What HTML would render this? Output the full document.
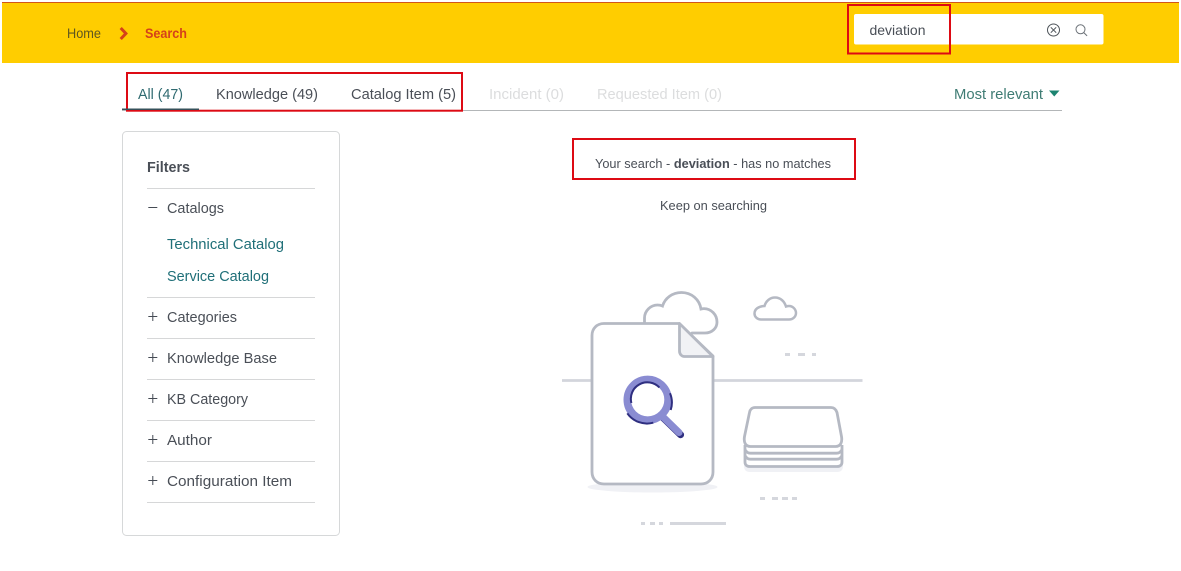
<!DOCTYPE html>
<html><head><meta charset="utf-8"><style>
html,body{margin:0;padding:0;background:#fff;width:1181px;height:571px;overflow:hidden}
svg{display:block}
text{font-family:"Liberation Sans",sans-serif;fill:#4a4f57}
</style></head><body>
<svg width="1181" height="571" viewBox="0 0 1181 571" xmlns="http://www.w3.org/2000/svg">
<rect x="2" y="2" width="1177" height="61" fill="#ffcd00"/>
<rect x="2" y="2" width="1177" height="1" fill="#d2561a"/>
<text x="67" y="38" font-size="13.500" textLength="34" lengthAdjust="spacingAndGlyphs" style="fill:#5f5720">Home</text>
<path d="M120.700 28l5.200 5.500-5.200 5.500" fill="none" stroke="#d5411a" stroke-width="3"/>
<text x="145" y="38" font-size="13.500" font-weight="bold" textLength="42" lengthAdjust="spacingAndGlyphs" style="fill:#d5411a">Search</text>
<rect x="854" y="14" width="249.500" height="30.500" rx="2" fill="#fff"/>
<text x="869.500" y="35" font-size="14" textLength="56" lengthAdjust="spacingAndGlyphs">deviation</text>
<g fill="none" stroke="#4d5359" stroke-width="1"><circle cx="1053.500" cy="30" r="6"/><path d="M1050.800 27.300l5.400 5.400M1056.200 27.300l-5.400 5.400"/></g>
<g fill="none" stroke="#6b7177" stroke-width="1"><circle cx="1080.500" cy="29.300" r="4.500"/><path d="M1083.800 32.600l3.300 3.300"/></g>
<rect x="848" y="5" width="102" height="48.500" fill="none" stroke="#dd0a14" stroke-width="2"/>

<rect x="122" y="110" width="940" height="1" fill="#b3b6b8"/>
<text x="138" y="99" font-size="15" textLength="45" lengthAdjust="spacingAndGlyphs" style="fill:#2f6a70">All (47)</text>
<text x="216" y="99" font-size="15" textLength="102" lengthAdjust="spacingAndGlyphs">Knowledge (49)</text>
<text x="351" y="99" font-size="15" textLength="105" lengthAdjust="spacingAndGlyphs">Catalog Item (5)</text>
<text x="489" y="99" font-size="15" textLength="75" lengthAdjust="spacingAndGlyphs" style="fill:#dcddde">Incident (0)</text>
<text x="597" y="99" font-size="15" textLength="125" lengthAdjust="spacingAndGlyphs" style="fill:#dcddde">Requested Item (0)</text>
<text x="954" y="99" font-size="15" textLength="89" lengthAdjust="spacingAndGlyphs" style="fill:#3f7c74">Most relevant</text>
<path d="M1049 90.500h10.500l-5.250 6z" fill="#1c8470"/>
<rect x="127" y="73" width="335" height="37.700" fill="none" stroke="#dd0a14" stroke-width="2"/>
<rect x="122" y="108.500" width="77" height="1.500" fill="#35505a"/>

<rect x="122.500" y="131.500" width="217" height="404" rx="4" fill="#fff" stroke="#d6d8d9"/>
<text x="147" y="172" font-size="14.500" font-weight="bold" textLength="43" lengthAdjust="spacingAndGlyphs">Filters</text>
<g fill="#d6d7d8"><rect x="147" y="188" width="168" height="1"/><rect x="147" y="297" width="168" height="1"/><rect x="147" y="338" width="168" height="1"/><rect x="147" y="379" width="168" height="1"/><rect x="147" y="420" width="168" height="1"/><rect x="147" y="461" width="168" height="1"/><rect x="147" y="502" width="168" height="1"/></g>
<g font-size="15">
<text x="167" y="213" textLength="57" lengthAdjust="spacingAndGlyphs">Catalogs</text>
<text x="167" y="249" textLength="117" lengthAdjust="spacingAndGlyphs" style="fill:#1f6f78">Technical Catalog</text>
<text x="167" y="281" textLength="102" lengthAdjust="spacingAndGlyphs" style="fill:#1f6f78">Service Catalog</text>
<text x="167" y="322" textLength="70" lengthAdjust="spacingAndGlyphs">Categories</text>
<text x="167" y="363" textLength="110" lengthAdjust="spacingAndGlyphs">Knowledge Base</text>
<text x="167" y="404" textLength="81" lengthAdjust="spacingAndGlyphs">KB Category</text>
<text x="167" y="445" textLength="45" lengthAdjust="spacingAndGlyphs">Author</text>
<text x="167" y="486" textLength="125" lengthAdjust="spacingAndGlyphs">Configuration Item</text>
</g>
<path d="M148.300 207.500h9M148.300 316.500h9M152.800 312v9M148.300 357.500h9M152.800 353v9M148.300 398.500h9M152.800 394v9M148.300 439.500h9M152.800 435v9M148.300 480.500h9M152.800 476v9" stroke="#454b54" stroke-width="1" fill="none"/>

<text x="595" y="168" font-size="13" textLength="236" lengthAdjust="spacingAndGlyphs">Your search - <tspan font-weight="bold">deviation</tspan> - has no matches</text>
<text x="660" y="210" font-size="13" textLength="107" lengthAdjust="spacingAndGlyphs">Keep on searching</text>
<rect x="573" y="139" width="282" height="40" fill="none" stroke="#dd0a14" stroke-width="2"/>

<!-- illustration -->
<ellipse cx="652.500" cy="487" rx="65" ry="5.500" fill="#f0f1f5"/>
<path d="M744 460h99v6q0 6-6 6h-87q-6 0-6-6z" fill="#f0f1f5"/>
<path d="M562 380.500h30M714 380.500h148.500" stroke="#d3d5dc" stroke-width="2.800" fill="none"/>
<path d="M644.500 324v-6c0-7 6-13 13-13 2 0 3.500 .3 5 1 2.500-8 10-13.500 19-13.500 10 0 18 7 19.500 16.500 1-.3 2-.4 3-.4 7 0 13 6 13 13.500 0 6-5 10.900-12 10.900h-13" fill="#fff" stroke="#b5b9c3" stroke-width="2.800" stroke-linecap="round"/>
<path d="M761 319.500h28c4 0 7-3 7-6.500s-3-7-7-7c-1 0-2 .2-3 .5-1.500-5-5.500-9-11-9-5 0-9 3.500-10.500 8.500-5.500 0-10 3-10 7.500 0 3.500 3 6 6.500 6z" fill="#fff" stroke="#b5b9c3" stroke-width="2.500"/>
<path d="M679 323.500H604c-7 0-12 5-12 12V472c0 7 5 12 12 12h97c7 0 12-5 12-12V356z" fill="#fff" stroke="#b5b9c3" stroke-width="2.800" stroke-linejoin="round"/>
<path d="M679.500 323.500V351c0 3 2 5.500 5 5.500h28.500z" fill="#f1f2f5" stroke="#b5b9c3" stroke-width="2.800" stroke-linejoin="round"/>
<path d="M745 445v17c0 3 2 4.500 5 4.500h87c3 0 5-1.500 5-4.500v-17" fill="#fff" stroke="#b5b9c3" stroke-width="2.800"/>
<path d="M745.500 450c1 2.500 2.500 3.200 5 3.200h86c2.500 0 4-.7 5-3.200M745.500 456c1 2.500 2.500 3.200 5 3.200h86c2.500 0 4-.7 5-3.200" fill="none" stroke="#b5b9c3" stroke-width="2.800"/>
<path d="M755 407.500h76c3 0 5 2 6 5l4.500 24c1 6-1 10-6 10h-85c-5 0-7-4-6-10l5-24c.5-3 2.500-5 5.500-5z" fill="#fff" stroke="#b5b9c3" stroke-width="2.800"/>
<g stroke="#d5d7dd" stroke-width="3" fill="none">
<path d="M785 354.500h5M798 354.500h7M812 354.500h4"/>
<path d="M760 498.500h5M772 498.500h6M782 498.500h6M792 498.500h5"/>
<path d="M641 523.500h4M650 523.500h5M659 523.500h4M670 523.500h56"/>
</g>
<path d="M662 416l18 17.500" stroke="#2f2f80" stroke-width="7" stroke-linecap="round" transform="translate(.6 1.200)"/>
<path d="M661 415l18 17.500" stroke="#8a8cd2" stroke-width="7" stroke-linecap="round"/>
<circle cx="647.700" cy="399.800" r="20.400" fill="none" stroke="#8a8cd2" stroke-width="7.600"/>
<path d="M627.300 413.300a24 24 0 0 0 26 9.400M670 393.300a24 24 0 0 1 .7 16.700M631.400 403a16.500 16.500 0 0 1 28-15.500" fill="none" stroke="#2f2f80" stroke-width="2"/>
</svg>
</body></html>
